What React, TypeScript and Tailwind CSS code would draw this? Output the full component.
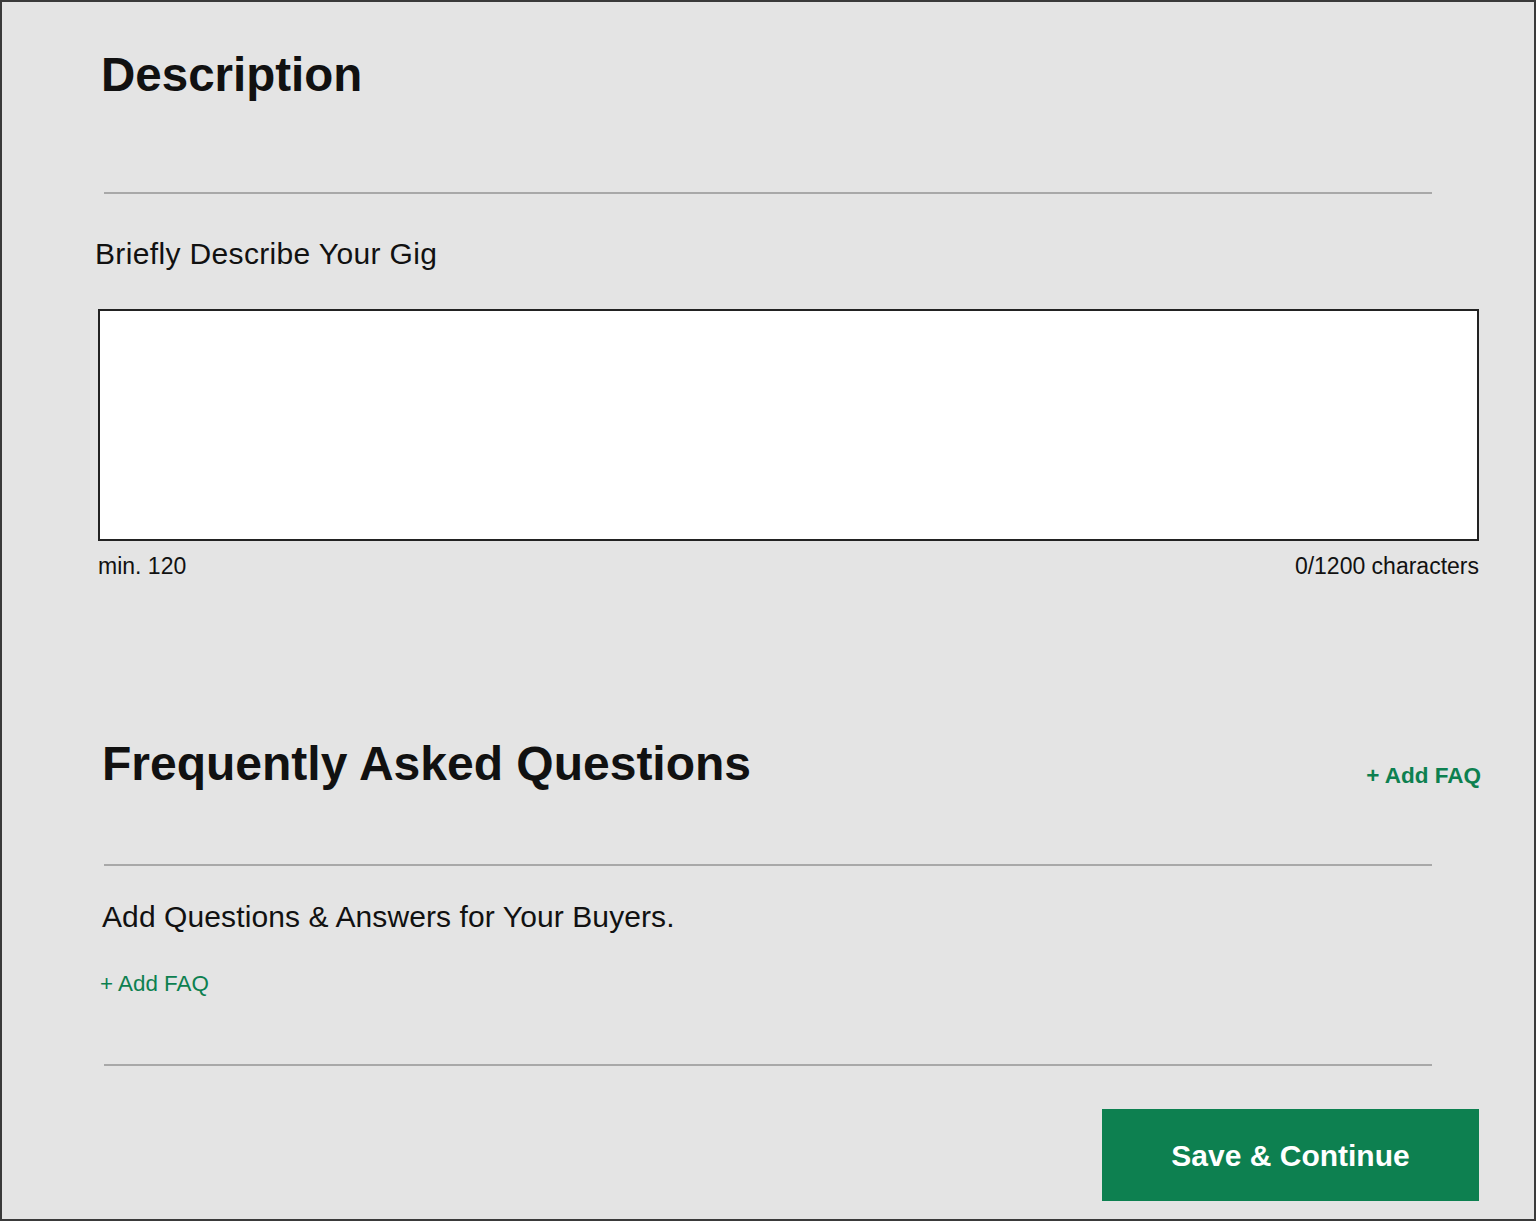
import React from 'react';

const font = { fontFamily: '"Liberation Sans", Arial, Helvetica, sans-serif' };

const Divider: React.FC<{ className?: string }> = ({ className = '' }) => (
  <div className={`h-[2px] w-[1328px] ml-[6px] bg-[#a8a8a8] ${className}`}></div>
);

const App: React.FC = () => {
  return (
    <div style={font} className="w-full">
      <div className="h-[1221px] border-2 border-[#3a3a3a] bg-[#e4e4e4] pl-[96px] pr-[55px] pt-[49px] flex flex-col text-[#111]">
        {/* Description */}
        <h2 className="ml-[3px] text-[47.5px] leading-[47px] font-bold">Description</h2>

        <Divider className="mt-[94px]" />

        <label className="mt-[45px] ml-[-3px] text-[30px] leading-none tracking-[0.35px]">Briefly Describe Your Gig</label>

        <textarea className="mt-[40px] h-[232px] w-full border-2 border-[#222] bg-white resize-none outline-none"></textarea>

        <div className="mt-[14px] flex justify-between text-[23px] leading-none">
          <span>min. 120</span>
          <span>0/1200 characters</span>
        </div>

        {/* FAQ */}
        <div className="mt-[162px] flex justify-between items-start">
          <h2 className="ml-[4px] text-[48px] leading-none font-bold">Frequently Asked Questions</h2>
          <button className="mt-[25px] mr-[-2px] text-[22.5px] leading-[22px] font-bold text-[#0d8050]">+ Add FAQ</button>
        </div>

        <Divider className="mt-[76px]" />

        <p className="mt-[36px] ml-[4px] text-[30px] leading-none tracking-[0.1px]">Add Questions &amp; Answers for Your Buyers.</p>

        <button className="mt-[41px] ml-[2px] self-start text-[22.4px] leading-[22px] text-[#0d8050]">+ Add FAQ</button>

        <Divider className="mt-[69px]" />

        <button className="mt-[43px] self-end h-[92px] w-[377px] bg-[#0d8050] text-white text-[30px] font-bold">
          Save &amp; Continue
        </button>
      </div>
    </div>
  );
};

export default App;
